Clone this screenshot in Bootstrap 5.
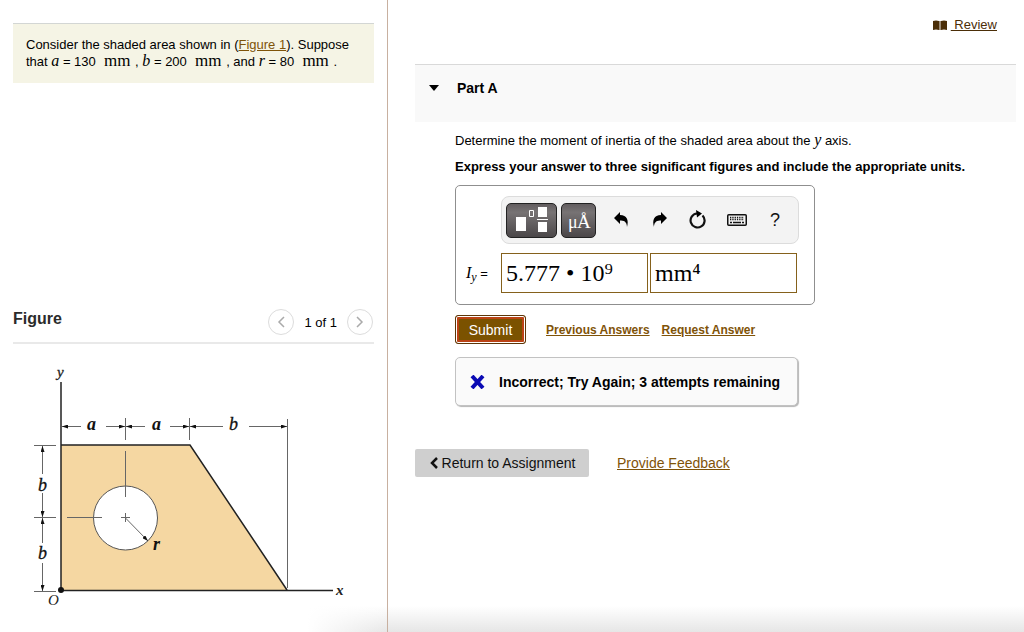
<!DOCTYPE html>
<html lang="en">
<head>
<meta charset="utf-8">
<meta name="viewport" content="width=device-width, initial-scale=1">
<title>Moment of inertia - Part A</title>
<link rel="stylesheet" href="https://cdn.jsdelivr.net/npm/bootstrap@5.3.0/dist/css/bootstrap.min.css">
<style>
  body { font-family: "Liberation Sans", Arial, sans-serif; font-size: 13px; line-height: 16px; color: #000; background: #fff; }
  a { color: #7f5308; }
  .page-shell { background: linear-gradient(to right, #fff 30%, transparent 38%), linear-gradient(to top, #e6e6e6, #fff 26px); }
  .problem-pane { width: 388px; border-right: 1px solid #c8b0a0; padding: 23px 13px 0; }
  .intro { background: #f5f4e5; border-top: 1px solid #d3d6d4; padding: 13px 12px 13px 13px; min-height: 60px; margin-bottom: 220px; }
  .eqn { font-family: "Liberation Serif", serif; font-size: 16px; line-height: 16px; }
  .unit { font-family: "Liberation Serif", serif; font-size: 17px; line-height: 16px; margin: 0 1px; }
  .fig-head { border-bottom: 2px solid #e9e9e9; height: 41px; margin-bottom: 16px; padding-right: 1px; }
  .fig-title { font-size: 16px; line-height: 20px; font-weight: 700; color: #2b2b2b; margin: 6px 0 0; }
  .fig-nav { gap: 10px; margin-top: 6px; }
  .round-btn { width: 26px; height: 26px; border: 1px solid #dcdcdc; border-radius: 50%; background: #fff; padding: 0; display: flex; align-items: center; justify-content: center; }
  .fig-count { padding-top: 2px; }
  .answer-pane { padding: 17px 8px 0 27px; min-width: 0; }
  .review { color: #4b2e08; margin-right: 19px; margin-bottom: 31px; }
  .part-band { background: #f9f9f9; border-top: 1px solid #d9d9d9; height: 58px; padding: 14px; margin-bottom: 10px; }
  .part-toggle { border: 0; background: none; padding: 0; gap: 18px; font-size: 14px; line-height: 18px; font-weight: 700; }
  .part-body { padding-left: 40px; }
  .part-body p { margin-bottom: 10px; }
  .answer-box { max-width: 360px; border: 1px solid #8f8f8f; border-radius: 5px; padding: 10px 15px 11px 10px; margin-bottom: 10px; }
  .tools { height: 48px; margin-left: 35px; margin-bottom: 9px; border: 1px solid #dcdcdc; border-radius: 8px; background: #f3f3f3; padding-left: 4px; }
  .tool-dark { height: 35px; border: 1px solid #222; border-radius: 5px; padding: 0; background: linear-gradient(#625d5f, #777374 25%, #4b4749); display: flex; align-items: center; justify-content: center; }
  .tool-dark.wide { width: 51px; }
  .tool-dark.slim { width: 35px; }
  .tool-row { padding: 0 10px 0 12px; }
  .tool-plain { width: 26px; height: 26px; border: 0; padding: 0; background: none; display: flex; align-items: center; justify-content: center; color: #111; font-size: 18px; }
  .lhs { flex: 0 0 35px; white-space: nowrap; }
  .lhs sub { font-size: 12px; }
  .fields { gap: 2px; margin-right: 2px; min-width: 0; }
  .field { flex: 1 1 0; width: 0; min-width: 0; height: 40px; border: 1px solid #85611c; background: #fff; padding: 0 4px; font-family: "Liberation Serif", serif; font-size: 24px; line-height: 38px; color: #000; }
  .submit { width: 71px; height: 29px; border: 1px solid #5d3608; border-radius: 3px; background: #7b5200; color: #fff; font-size: 14px; line-height: 18px; padding: 0; box-shadow: inset 0 0 0 1px #fff, inset 0 0 0 3px #bb4316; }
  .small-link { font-size: 12px; font-weight: 700; }
  .verdict { max-width: 343px; height: 49px; border: 1px solid #c2c2c2; border-radius: 5px; background: #fafafa; box-shadow: 1px 1px 1px #b5b5b5; padding-left: 14px; font-size: 14px; font-weight: 700; gap: 14px; margin: 13px 0 43px; }
  .return-btn { width: 174px; height: 28px; border: 0; border-radius: 2px; background: #cfcfcf; color: #111; font-size: 14px; padding: 0; gap: 4px; }
  .feedback-link { font-size: 14px; }
  svg { flex: none; }
  .geometry { font-family: "Liberation Serif", serif; font-style: italic; font-weight: 700; }
</style>
</head>
<body>
<div class="page-shell d-flex min-vh-100">
  <aside class="problem-pane flex-shrink-0">
    <div class="intro">Consider the shaded area shown in (<a href="#figure">Figure 1</a>). Suppose<br>that <i class="eqn">a</i> = 130&nbsp; <span class="unit">mm</span> , <i class="eqn">b</i> = 200&nbsp; <span class="unit">mm</span> , and <i class="eqn">r</i> = 80&nbsp; <span class="unit">mm</span> .</div>
    <section id="figure">
      <header class="fig-head d-flex justify-content-between">
        <h2 class="fig-title">Figure</h2>
        <nav class="fig-nav d-flex align-items-center align-self-start" aria-label="Figures">
          <button type="button" class="round-btn" aria-label="Previous figure"><svg width="8" height="12" fill="none" stroke="#aaa" stroke-width="1.5"><path d="M7 1 2 6l5 5"/></svg></button>
          <span class="fig-count">1 of 1</span>
          <button type="button" class="round-btn" aria-label="Next figure"><svg width="8" height="12" fill="none" stroke="#aaa" stroke-width="1.5"><path d="m1 1 5 5-5 5"/></svg></button>
        </nav>
      </header>
      <svg class="geometry d-block w-100" viewBox="13 360 361 250" role="img" aria-label="Shaded trapezoid with a circular hole">
        <defs><marker id="tip" viewBox="0 0 6 4" refX="6" refY="2" markerWidth="6" markerHeight="4" markerUnits="userSpaceOnUse" orient="auto"><path d="M0 0 6 2 0 4z" fill="#111"/></marker></defs>
        <path d="M61 445H190L287 590H61z" fill="#f5d7a2"/>
        <circle cx="125.500" cy="518" r="32" fill="#fff" stroke="#555"/>
        <path d="M61 382V590.500H333M61 445H190L287 590" fill="none" stroke="#222" stroke-width="1.500"/>
        <g fill="none" stroke="#666" stroke-width="1">
          <path d="M125.500 418v22M189.500 418v22M287.500 419v169M34 445.500h22M34 517.500h22M34 591.500h22M125.500 451v46M67 517.500h35M121 517.500h9M125.500 513v9"/>
          <path marker-end="url(#tip)" d="M81 426.500H62"/><path marker-end="url(#tip)" d="M106 426.500h19"/><path marker-end="url(#tip)" d="M145 426.500h-19"/><path marker-end="url(#tip)" d="M170 426.500h19"/><path marker-end="url(#tip)" d="M223 426.500h-33"/><path marker-end="url(#tip)" d="M249 426.500h38"/>
          <path marker-end="url(#tip)" d="M42.500 474v-28"/><path marker-end="url(#tip)" d="M42.500 493v24"/><path marker-end="url(#tip)" d="M42.500 543v-25"/><path marker-end="url(#tip)" d="M42.500 563v28"/>
          <path marker-end="url(#tip)" d="M125.500 518 148 541"/>
        </g>
        <circle cx="61" cy="590" r="3" fill="#111"/>
        <g font-size="18" fill="#111">
          <text x="87" y="430">a</text><text x="152" y="430">a</text><text x="229" y="430" font-weight="400" stroke="#111" stroke-width=".3">b</text>
          <text x="38" y="491" font-weight="400" stroke="#111" stroke-width=".3">b</text><text x="38" y="559" font-weight="400" stroke="#111" stroke-width=".3">b</text><text x="153" y="550">r</text>
        </g>
        <g font-size="15" fill="#222"><text x="57" y="377" font-weight="400" stroke="#222" stroke-width=".3">y</text><text x="336" y="595">x</text><text x="48" y="605" font-weight="400">O</text></g>
      </svg>
    </section>
  </aside>

  <main class="answer-pane flex-grow-1">
    <div class="d-flex justify-content-end align-items-center review">
      <svg width="14" height="11" fill="#4b2e08" class="me-1"><path d="M0 1q3-1 6 0v9q-3-1-6 0zM8 1q3-1 6 0v9q-3-1-6 0z"/><path d="M6 1h2v9H6z" opacity=".55"/></svg>
      <a href="#review" class="text-reset">&nbsp;Review</a>
    </div>
    <header class="part-band">
      <button type="button" class="part-toggle d-flex align-items-center text-black"><svg width="10" height="6"><path d="M0 0h10L5 6z"/></svg>Part A</button>
    </header>
    <div class="part-body">
      <p>Determine the moment of inertia of the shaded area about the <i class="eqn">y</i> axis.</p>
      <p class="fw-bold">Express your answer to three significant figures and include the appropriate units.</p>
      <form onsubmit="return false">
        <div class="answer-box">
          <div class="tools d-flex align-items-center">
            <button type="button" class="tool-dark wide me-1" aria-label="Templates"><svg width="32" height="26" fill="#fff"><path d="M0 10h10v14H0zM22 0h9v10h-9zM21 12h11v1H21zM22 15h9v10h-9z"/><path d="M13.500 3.500h4v6h-4z" fill="none" stroke="#fff"/></svg></button>
            <button type="button" class="tool-dark slim" aria-label="Symbols"><svg width="24" height="28" fill="#fff" font-family="Liberation Serif, serif"><text x="1" y="22" font-size="18">μ</text><text x="10" y="22" font-size="19">Å</text></svg></button>
            <div class="tool-row d-flex flex-grow-1 justify-content-between">
              <button type="button" class="tool-plain" aria-label="Undo"><svg width="15" height="16"><path d="M0 6 6 0v3c7 0 9 5 7 12C13 11 11 8 6 8.500V12z"/></svg></button>
              <button type="button" class="tool-plain" aria-label="Redo"><svg width="15" height="16"><path d="M15 6 9 0v3C2 3 0 8 2 15c0-4 2-7 7-6.500V12z"/></svg></button>
              <button type="button" class="tool-plain" aria-label="Reset"><svg width="18" height="20"><path d="M13.500 5.500a7 7 0 1 1-5.500-2" fill="none" stroke="#111" stroke-width="2.200"/><path d="m7 0 6 3.500-5 4z"/></svg></button>
              <button type="button" class="tool-plain" aria-label="Keyboard"><svg width="20" height="12" fill="none" stroke="#111"><rect x=".75" y=".75" width="18.500" height="10.500" rx="1" stroke-width="1.500"/><path d="M3 3.500h14M3 5.500h14" stroke-width="1.300" stroke-dasharray="1.300 1"/><path d="M3 8.500h2m1 0h8m1 0h2" stroke-width="1.300"/></svg></button>
              <button type="button" class="tool-plain" aria-label="Help">?</button>
            </div>
          </div>
          <div class="d-flex align-items-center">
            <label for="value" class="lhs"><i class="eqn">I<sub>y</sub></i> =</label>
            <div class="fields d-flex flex-grow-1">
              <input id="value" class="field" type="text" value="5.777 • 10⁹">
              <input class="field" type="text" value="mm⁴" aria-label="Units">
            </div>
          </div>
        </div>
        <div class="d-flex align-items-center">
          <button type="submit" class="submit">Submit</button>
          <a href="#previous" class="small-link ms-3 ps-1">Previous Answers</a>
          <a href="#request" class="small-link ms-2 ps-1">Request Answer</a>
        </div>
      </form>
      <div class="verdict d-flex align-items-center" role="status"><svg width="15" height="14" stroke="#0b0bb4" stroke-width="4"><path d="m2 1 11 12M13 1 2 13"/></svg>Incorrect; Try Again; 3 attempts remaining</div>
    </div>
    <div class="d-flex align-items-center">
      <button type="button" class="return-btn d-flex align-items-center justify-content-center me-4"><svg width="9" height="12" fill="none" stroke="#111" stroke-width="2.500"><path d="M8 1 3 6l5 5"/></svg>Return to Assignment</button>
      <a href="#feedback" class="feedback-link ms-1">Provide Feedback</a>
    </div>
  </main>
</div>
<script src="https://cdn.jsdelivr.net/npm/bootstrap@5.3.0/dist/js/bootstrap.bundle.min.js"></script>
</body>
</html>
